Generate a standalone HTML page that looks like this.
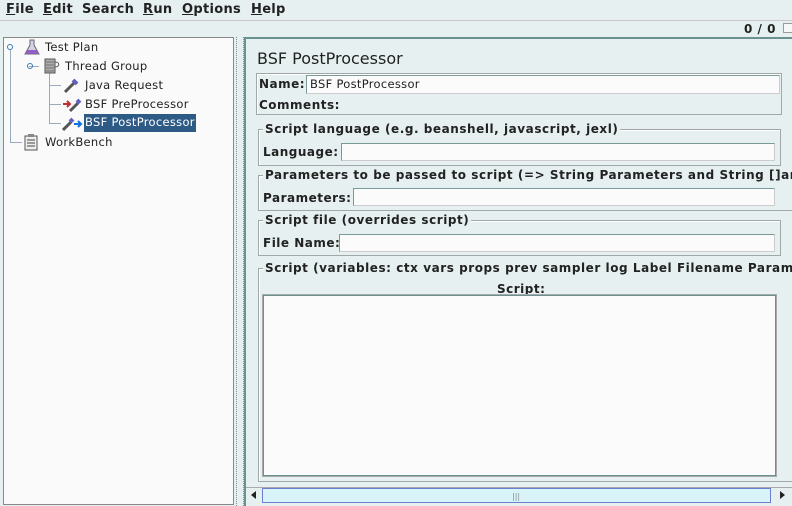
<!DOCTYPE html>
<html style="overflow:hidden"><head><style>
*{margin:0;padding:0;box-sizing:border-box}
html,body{width:792px;height:506px;overflow:hidden}
body{background:#e6f0f0;font-family:"DejaVu Sans","Liberation Sans",sans-serif;position:relative;color:#222}
#w{position:absolute;left:0;top:0;width:792px;height:506px;overflow:hidden}
.a{position:absolute;white-space:nowrap}
.b{font-weight:bold;font-size:12px;letter-spacing:0.5px}
.menu{font-size:13px;font-weight:bold;top:2px;letter-spacing:0.3px}
.inp{position:absolute;background:#fbfbfb;border:1px solid #7a9a9a;border-right-color:#ccc;border-bottom-color:#ccc}
.grp{position:absolute;border:1px solid #a0a8a8;box-shadow:inset 1px 1px 0 #fff}
.leg{position:absolute;background:#e6f0f0;padding:0 2px;font-weight:bold;font-size:12px;letter-spacing:0.55px;white-space:nowrap}
.t{font-size:11.5px;letter-spacing:0.3px}
</style></head><body><div id="w">
<div class="a menu" style="left:6px"><u>F</u>ile</div>
<div class="a menu" style="left:43px"><u>E</u>dit</div>
<div class="a menu" style="left:82px">Search</div>
<div class="a menu" style="left:143px"><u>R</u>un</div>
<div class="a menu" style="left:182px"><u>O</u>ptions</div>
<div class="a menu" style="left:251px"><u>H</u>elp</div>
<div class="a" style="left:0;top:20px;width:792px;height:1px;background:#c8c8c8"></div>
<div class="a b" style="left:744px;top:22px;font-size:12px">0 / 0</div>
<div class="a" style="left:783px;top:23px;width:12px;height:10px;border:1px solid #999;background:#f4f8f8"></div>
<div class="a" style="left:3px;top:37px;width:231px;height:468px;background:#fafafa;border:1px solid #888"></div>
<div class="a" style="left:236px;top:37px;width:8px;height:469px;border-left:1px dotted #889;border-right:1px dotted #889"></div>
<div class="a" style="left:10px;top:50px;width:1px;height:92px;background:#9ab"></div>
<div class="a" style="left:10px;top:142px;width:12px;height:1px;background:#9ab"></div>
<div class="a" style="left:49px;top:72px;width:1px;height:52px;background:#9ab"></div>
<div class="a" style="left:49px;top:85px;width:12px;height:1px;background:#9ab"></div>
<div class="a" style="left:49px;top:104px;width:12px;height:1px;background:#9ab"></div>
<div class="a" style="left:49px;top:123px;width:12px;height:1px;background:#9ab"></div>
<div class="a" style="left:29px;top:66px;width:10px;height:1px;background:#9ab"></div>
<div class="a" style="left:7px;top:44px;width:6px;height:6px;border:1.5px solid #3a7ab8;border-radius:50%"></div>
<div class="a" style="left:27px;top:63px;width:6px;height:6px;border:1.5px solid #3a7ab8;border-radius:50%"></div>
<svg class="a" style="left:24px;top:39px" width="16" height="17"><path d="M6 1h4v5l5 9H1l5-9z" fill="#d8d0e8" stroke="#666"/><path d="M3 11h10l2 4H1z" fill="#9060c0"/></svg>
<svg class="a" style="left:43px;top:57px" width="18" height="18"><rect x="2" y="2" width="10" height="14" fill="#aaa" stroke="#555"/><path d="M3 5h8M3 8h8M3 11h8M3 14h8" stroke="#777"/><path d="M12 5c5 0 5 5 0 5" stroke="#555" fill="none"/></svg>
<svg class="a" style="left:62px;top:76px" width="18" height="18"><path d="M3 16l9-9" stroke="#555" stroke-width="3"/><path d="M11 4l4 4" stroke="#6060c0" stroke-width="4"/></svg>
<svg class="a" style="left:62px;top:95px" width="20" height="18"><path d="M1 9h6M5 6l3 3-3 3" stroke="#c03030" stroke-width="2" fill="none"/><path d="M8 16l8-8" stroke="#555" stroke-width="3"/><path d="M15 5l3 3" stroke="#6060c0" stroke-width="4"/></svg>
<svg class="a" style="left:62px;top:114px" width="22" height="18"><path d="M1 16l8-8" stroke="#555" stroke-width="3"/><path d="M8 5l3 3" stroke="#6060c0" stroke-width="4"/><path d="M12 10h7M16 7l3 3-3 3" stroke="#1070e0" stroke-width="2" fill="none"/></svg>
<svg class="a" style="left:24px;top:134px" width="14" height="17"><rect x="1" y="2" width="12" height="14" fill="#eee" stroke="#555"/><rect x="4" y="0" width="6" height="3" fill="#888"/><path d="M3 6h8M3 9h8M3 12h8" stroke="#444"/></svg>
<div class="a t" style="left:45px;top:40px">Test Plan</div>
<div class="a t" style="left:65px;top:59px">Thread Group</div>
<div class="a t" style="left:85px;top:78px">Java Request</div>
<div class="a t" style="left:85px;top:97px">BSF PreProcessor</div>
<div class="a t" style="left:84px;top:114px;background:#2e5a86;color:#fff;padding:1px 1px;height:18px">BSF PostProcessor</div>
<div class="a t" style="left:45px;top:135px">WorkBench</div>
<div class="a" style="left:244px;top:37px;width:548px;height:469px;border-top:2px solid #6a9090;border-left:2px solid #6a9090"></div>
<div class="a" style="left:257px;top:49px;font-size:16px">BSF PostProcessor</div>
<div class="grp" style="left:256px;top:73px;width:526px;height:42px"></div>
<div class="a b" style="left:259px;top:77px">Name:</div>
<div class="inp" style="left:306px;top:75px;width:474px;height:19px"></div>
<div class="a t" style="left:310px;top:77px">BSF PostProcessor</div>
<div class="a b" style="left:259px;top:98px">Comments:</div>
<div class="grp" style="left:258px;top:129px;width:523px;height:37px"></div>
<div class="leg" style="left:263px;top:122px">Script language (e.g. beanshell, javascript, jexl)</div>
<div class="a b" style="left:263px;top:145px">Language:</div>
<div class="inp" style="left:341px;top:143px;width:434px;height:18px"></div>
<div class="grp" style="left:258px;top:175px;width:540px;height:36px"></div>
<div class="leg" style="left:263px;top:168px">Parameters to be passed to script (=&gt; String Parameters and String []args)</div>
<div class="a b" style="left:263px;top:191px">Parameters:</div>
<div class="inp" style="left:353px;top:188px;width:422px;height:18px"></div>
<div class="grp" style="left:258px;top:220px;width:523px;height:36px"></div>
<div class="leg" style="left:263px;top:213px">Script file (overrides script)</div>
<div class="a b" style="left:263px;top:236px">File Name:</div>
<div class="inp" style="left:339px;top:234px;width:436px;height:18px"></div>
<div class="grp" style="left:258px;top:268px;width:540px;height:214px"></div>
<div class="leg" style="left:263px;top:261px">Script (variables: ctx vars props prev sampler log Label Filename Parameters args[] bsf)</div>
<div class="a b" style="left:497px;top:282px">Script:</div>
<div class="inp" style="left:263px;top:295px;width:513px;height:181px;border:1px solid #6a9090;box-shadow:0 0 0 1px #aaa"></div>
<div class="a" style="left:246px;top:487px;width:546px;height:19px;background:#e6f0f0;border-top:1px solid #aaa"></div>
<div class="a" style="left:262px;top:488px;width:509px;height:15px;background:#d8f4f8;border:1px solid #6a80d0"></div>
<div class="a" style="left:512px;top:492px;font-size:8px;color:#888">|||</div>
<div class="a" style="left:251px;top:491px;width:0;height:0;border-top:4px solid transparent;border-bottom:4px solid transparent;border-right:5px solid #222"></div>
<div class="a" style="left:780px;top:491px;width:0;height:0;border-top:4px solid transparent;border-bottom:4px solid transparent;border-left:5px solid #222"></div>
</div></body></html>
